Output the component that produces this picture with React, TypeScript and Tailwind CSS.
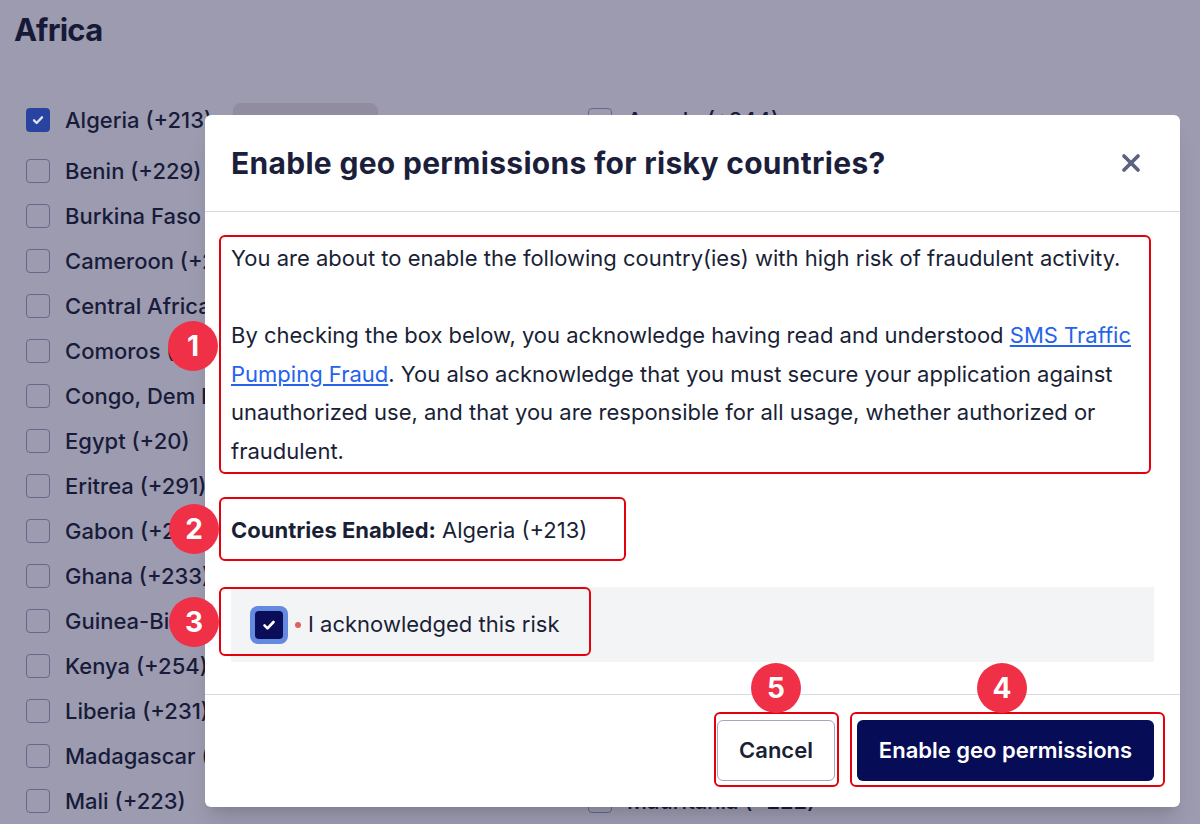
import { X } from 'lucide-react';

const leftCountries = [
  'Algeria (+213)',
  'Benin (+229)',
  'Burkina Faso (+226)',
  'Cameroon (+237)',
  'Central African Republic (+236)',
  'Comoros (+269)',
  'Congo, Dem Rep (+243)',
  'Egypt (+20)',
  'Eritrea (+291)',
  'Gabon (+241)',
  'Ghana (+233)',
  'Guinea-Bissau (+245)',
  'Kenya (+254)',
  'Liberia (+231)',
  'Madagascar (+261)',
  'Mali (+223)',
];

const rightCountries = [
  'Angola (+244)',
  'Botswana (+267)',
  'Burundi (+257)',
  'Cape Verde (+238)',
  'Chad (+235)',
  'Congo (+242)',
  "Cote d'Ivoire (+225)",
  'Djibouti (+253)',
  'Ethiopia (+251)',
  'Gambia (+220)',
  'Guinea (+224)',
  'Lesotho (+266)',
  'Libya (+218)',
  'Malawi (+265)',
  'Mauritius (+230)',
  'Mauritania (+222)',
];

const Check = ({ className }: { className?: string }) => (
  <svg viewBox="0 0 24 24" className={className} fill="none" stroke="currentColor" strokeWidth={3.5} strokeLinecap="round" strokeLinejoin="round">
    <path d="M6 12.5l4 4 8-8.5" />
  </svg>
);

const CountryRow = ({ name, checked, first }: { name: string; checked?: boolean; first?: boolean }) => (
  <div className={`flex items-center ${first ? 'h-[34px] mb-[1px]' : 'h-[24px]'}`}>
    {checked ? (
      <span className="w-[24px] h-[24px] rounded-[4px] bg-[#2843a0] flex items-center justify-center text-[#dfe2ee]">
        <Check className="w-[16px] h-[16px]" />
      </span>
    ) : (
      <span className="w-[24px] h-[24px] rounded-[4px] border-[1.5px] border-[#66688b]" />
    )}
    <span className="ml-[15px] text-[22px] font-medium text-[#181b3a] whitespace-nowrap">{name}</span>
    {checked && <span className="ml-[21px] w-[145px] h-[34px] rounded-lg bg-[#928ca0]" />}
  </div>
);

export default function App() {
  return (
    <div className="relative w-[1200px] h-[824px] overflow-hidden bg-[#9c9bb0] font-[Inter,'Liberation_Sans',sans-serif]">
      {/* page behind the dialog */}
      <div className="px-[14px] pt-[12px]">
        <h1 className="text-[31px] leading-[36px] font-bold text-[#161a36] tracking-tight">Africa</h1>
        <div className="grid grid-cols-[562px_1fr] ml-[12px] mt-[55px]">
          <div className="flex flex-col gap-[21px]">
            {leftCountries.map((c, i) => (
              <CountryRow key={c} name={c} checked={i === 0} first={i === 0} />
            ))}
          </div>
          <div className="flex flex-col gap-[21px]">
            {rightCountries.map((c, i) => (
              <CountryRow key={c} name={c} first={i === 0} />
            ))}
          </div>
        </div>
      </div>

      {/* dialog */}
      <div className="absolute left-[205px] top-[115px] w-[975px] bg-white rounded-[6px] shadow-xl text-[#1a1f36]">
        <div className="h-[97px] flex items-center justify-between px-[26px] border-b border-[#d7dae2]">
          <h2 className="text-[30px] font-bold tracking-[0.3px] text-[#1b1f3b]">
            Enable geo permissions for risky countries?
          </h2>
          <X className="w-[28px] h-[28px] mr-[9px] text-[#5b6380]" strokeWidth={3.2} />
        </div>

        <div className="px-[26px] pt-[27px] pb-[32px]">
          <p className="text-[22px] leading-[38.5px]">
            You are about to enable the following country(ies) with high risk of fraudulent activity.
            <br />
            <br />
            By checking the box below, you acknowledge having read and understood{' '}
            <a className="text-[#2563eb] underline underline-offset-2">SMS Traffic Pumping Fraud</a>. You also
            acknowledge that you must secure your application against unauthorized use, and that you are
            responsible for all usage, whether authorized or fraudulent.
          </p>

          <p className="mt-[45px] text-[22px] leading-[30px]">
            <span className="font-bold">Countries Enabled:</span> Algeria (+213)
          </p>

          <div className="mt-[42px] h-[75px] bg-[#f3f4f6] flex items-center pl-[19px]">
            <span className="w-[38px] h-[38px] rounded-[8px] bg-[#6389e0] flex items-center justify-center">
              <span className="w-[28px] h-[28px] rounded-[4px] bg-[#0a0e58] flex items-center justify-center text-white">
                <Check className="w-[18px] h-[18px]" />
              </span>
            </span>
            <span className="ml-[7px] w-[6px] h-[6px] rounded-full bg-[#e0605c]" />
            <span className="ml-[7px] text-[22px]">I acknowledged this risk</span>
          </div>
        </div>

        <div className="border-t border-[#d7dae2] flex justify-end gap-[22px] px-[26px] pt-[25px] pb-[26px]">
          <button className="w-[118px] h-[61px] rounded-[6px] border-[1.5px] border-[#a3a8ba] bg-white text-[22px] font-semibold text-[#1a1f36]">
            Cancel
          </button>
          <button className="w-[297px] h-[61px] rounded-[6px] bg-[#070c57] text-[22px] font-semibold text-white">
            Enable geo permissions
          </button>
        </div>
      </div>

      {/* callout outlines */}
      <div className="absolute left-[219px] top-[235px] w-[932px] h-[239px] border-2 border-[#e5000d] rounded-[6px]" />
      <div className="absolute left-[219px] top-[497px] w-[407px] h-[64px] border-2 border-[#e5000d] rounded-[6px]" />
      <div className="absolute left-[219px] top-[587px] w-[372px] h-[69px] border-2 border-[#e5000d] rounded-[6px]" />
      <div className="absolute left-[714px] top-[712px] w-[125px] h-[75px] border-2 border-[#e5000d] rounded-[6px]" />
      <div className="absolute left-[850px] top-[712px] w-[315px] h-[75px] border-2 border-[#e5000d] rounded-[6px]" />

      {/* numbered callout badges */}
      <div className="absolute left-[168px] top-[321px] w-[50px] h-[50px] rounded-full bg-[#ef3047] text-white text-[28px] font-bold flex items-center justify-center">1</div>
      <div className="absolute left-[169px] top-[504px] w-[50px] h-[50px] rounded-full bg-[#ef3047] text-white text-[28px] font-bold flex items-center justify-center">2</div>
      <div className="absolute left-[169px] top-[597px] w-[50px] h-[50px] rounded-full bg-[#ef3047] text-white text-[28px] font-bold flex items-center justify-center">3</div>
      <div className="absolute left-[977px] top-[663px] w-[50px] h-[50px] rounded-full bg-[#ef3047] text-white text-[28px] font-bold flex items-center justify-center">4</div>
      <div className="absolute left-[751px] top-[663px] w-[50px] h-[50px] rounded-full bg-[#ef3047] text-white text-[28px] font-bold flex items-center justify-center">5</div>
    </div>
  );
}
